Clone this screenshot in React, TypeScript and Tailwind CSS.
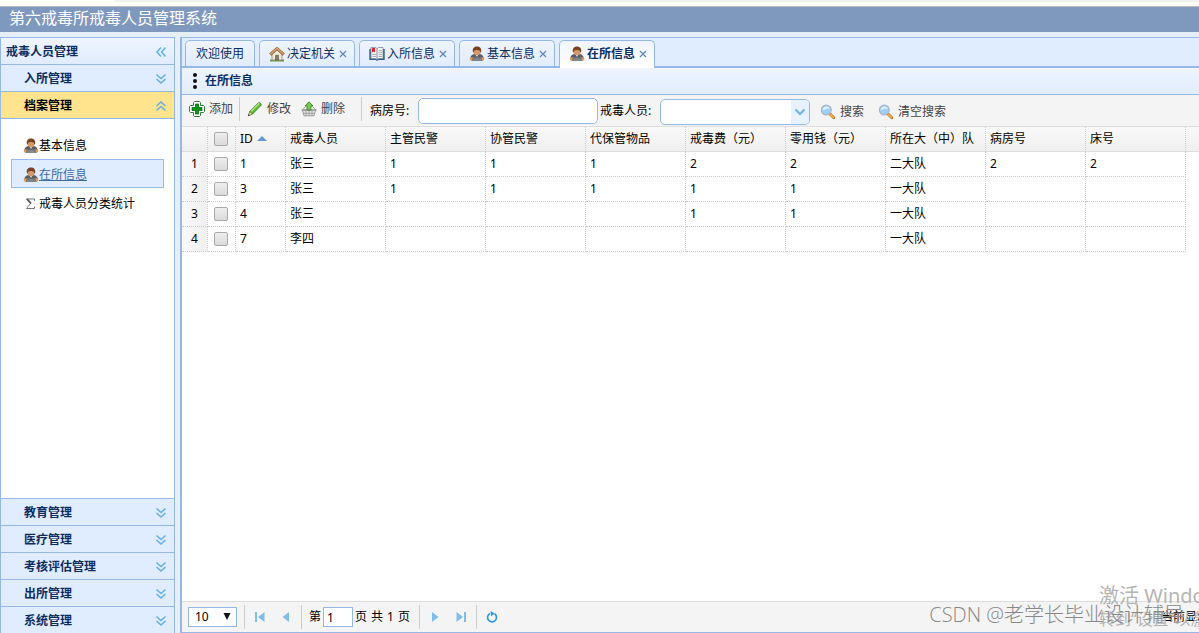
import React from "react";
import clsx from "clsx";

type IconProps = { className?: string };

function UserIcon({ className }: IconProps) {
    return (
        <svg viewBox="0 0 16 16" className={clsx("size-4 shrink-0", className)}>
            <path d="M1.200 13.500C1 11 2.300 8.500 5 8h6c2.700.5 4 3 3.800 5.500-.2 1-1.500 1.200-2.500 1.200H4c-1 0-2.600-.2-2.800-1.200z" fill="#5b5e63" />
            <ellipse cx="2.200" cy="12.800" rx="1.500" ry="1.600" fill="#e09a52" />
            <ellipse cx="13.800" cy="12.800" rx="1.500" ry="1.600" fill="#e09a52" />
            <path d="M3.500 11.500c2 1.200 7 1.200 9 0M4 13.700h8" stroke="#8d9197" strokeWidth="1" fill="none" />
            <path d="M6.300 8h3.400L8 11z" fill="#e8e8ea" />
            <path d="M4.300 3.500h7.400v2.800C11.500 8 10 9.300 8 9.300S4.500 8 4.300 6.300z" fill="#d29a6b" />
            <path d="M3.800 5.800C3.200 2 5.500.4 8 .4s4.800 1.600 4.200 5.400l-.9.7C11.300 4.500 10 3.900 8 4 6 3.900 4.700 4.500 4.700 6.500z" fill="#7a4220" />
        </svg>
    );
}

function HomeIcon() {
    return (
        <svg viewBox="0 0 16 16" className="size-4 shrink-0">
            <path d="M1 14.500h14" stroke="#6f9a3c" strokeWidth="2" />
            <path d="M3 7l5-4 5 4v7H3z" fill="#eeead9" stroke="#8d8674" strokeWidth=".8" />
            <path d="M6.500 14V9.300h3V14z" fill="#8a7b66" stroke="#5b5244" strokeWidth=".6" />
            <path d="M1.200 8.700L8 2.500l6.800 6.200" fill="none" stroke="#8a5a2a" strokeWidth="3" strokeLinejoin="round" />
            <path d="M1.200 8.500L8 2.300l6.800 6.200" fill="none" stroke="#d6a26b" strokeWidth="1.600" strokeLinejoin="round" />
        </svg>
    );
}

function BookIcon() {
    return (
        <svg viewBox="0 0 16 16" className="size-4 shrink-0">
            <path d="M.3 3v11h6.200l1.500 1 1.500-1h6.200V3z" fill="#2f6094" />
            <path d="M2 1.500h4.500L8 2.700l1.500-1.200H14V12.500H9.500L8 13.500l-1.500-1H2z" fill="#f4f4f0" stroke="#7d8795" strokeWidth=".8" />
            <path d="M8 2.700v10.500" stroke="#8791a0" />
            <path d="M3.300 8.500H7M3.300 10.500H7M9.500 4.500h3.500M9.500 6.500h3.500M9.500 8.500h3.500M9.500 10.500h3.500" stroke="#a2a8b2" strokeWidth=".9" />
            <path d="M3 2h3v4.500L4.500 5.500 3 6.500z" fill="#e32626" />
        </svg>
    );
}

function SigmaIcon() {
    return (
        <svg viewBox="0 0 16 16" className="size-4 shrink-0">
            <path d="M11.500 5V3H3.500l4 4.500-4 5h8v-2" fill="none" stroke="#777" />
            <path d="M4 3l4 4.500" stroke="#555" strokeWidth="1.800" />
        </svg>
    );
}

function AddIcon() {
    return (
        <svg viewBox="0 0 16 16" className="size-4 shrink-0">
            <path d="M5.500.5h5l1 1v3h3l1 1v5l-1 1h-3v3l-1 1h-5l-1-1v-3h-3l-1-1v-5l1-1h3v-3z" fill="#fff" stroke="#2c7d35" />
            <path d="M6.500 3h3v3.500H13v3H9.500V13h-3V9.500H3v-3h3.500z" fill="#0c950f" stroke="#096c13" strokeWidth=".8" />
        </svg>
    );
}

function PencilIcon() {
    return (
        <svg viewBox="0 0 16 16" className="size-4 shrink-0">
            <path d="M1.500 14.500l1.300-4L11.500 1.800c1-.8 3.300 1.200 2.500 2.500l-8.700 8.900z" fill="#62ba32" stroke="#387d1e" strokeWidth=".9" />
            <path d="M4.300 10.300l8-8" stroke="#b7e783" strokeWidth="1.300" />
            <path d="M1.200 14.800l1.500-4 2.600 2.500z" fill="#f0dcab" stroke="#5a6b2d" strokeWidth=".5" />
            <path d="M1 15l.6-1.800 1.200 1.200z" fill="#333" />
        </svg>
    );
}

function BasketIcon() {
    return (
        <svg viewBox="0 0 16 16" className="size-4 shrink-0">
            <path d="M1.500 9.500h13l-1.500 5.300H3z" fill="#e2e2e2" stroke="#888" strokeWidth=".8" />
            <path d="M.5 9h15" stroke="#a2a2a2" strokeWidth="1.800" />
            <path d="M5 10v4.500M8 10v4.500M11 10v4.500M2.500 12.300h11" stroke="#999" strokeWidth=".8" />
            <path d="M1.800 8.500L4 6M14.200 8.500L12 6" stroke="#aaa" />
            <path d="M8 .8L12 5H9.900v4H6.100V5H4z" fill="#78ca4d" stroke="#348527" strokeWidth=".9" />
        </svg>
    );
}

function SearchIcon() {
    return (
        <svg viewBox="0 0 16 16" className="size-4 shrink-0">
            <path d="M9.800 9.800l4 4" stroke="#a8631f" strokeWidth="2.800" strokeLinecap="round" />
            <path d="M10.500 10.500l3 3" stroke="#f5a844" strokeWidth="1.800" strokeLinecap="round" />
            <circle cx="6.300" cy="6" r="4.900" fill="#9fd0f6" stroke="#a9b5c3" strokeWidth="1.200" />
            <path d="M2.600 6.500c.2-3 2-4.200 4.200-4 1.700.1 2.700 1 3 2.500-2.500-.5-5 .2-7.200 1.500z" fill="#dcf0fd" />
        </svg>
    );
}

function DoubleChevron({ className }: IconProps) {
    return (
        <svg viewBox="0 0 16 16" className={clsx("size-4 shrink-0", className)}>
            <path d="M3.500 3.500L8 7.500l4.500-4M3.500 8L8 12l4.500-4" fill="none" stroke="#63afea" strokeWidth="1.500" />
        </svg>
    );
}

const links = [
    { label: "基本信息", icon: <UserIcon /> },
    { label: "在所信息", icon: <UserIcon />, active: true },
    { label: "戒毒人员分类统计", icon: <SigmaIcon /> },
];

const tabs = [
    { label: "欢迎使用" },
    { label: "决定机关", icon: <HomeIcon /> },
    { label: "入所信息", icon: <BookIcon /> },
    { label: "基本信息", icon: <UserIcon /> },
    { label: "在所信息", icon: <UserIcon />, active: true },
];

const columns = [
    "戒毒人员",
    "主管民警",
    "协管民警",
    "代保管物品",
    "戒毒费（元）",
    "零用钱（元）",
    "所在大（中）队",
    "病房号",
    "床号",
];

const rows = [
    ["1", "张三", "1", "1", "1", "2", "2", "二大队", "2", "2"],
    ["3", "张三", "1", "1", "1", "1", "1", "一大队", "", ""],
    ["4", "张三", "", "", "", "1", "1", "一大队", "", ""],
    ["7", "李四", "", "", "", "", "", "一大队", "", ""],
];

function AccordionHeader({ label, open }: { label: string; open?: boolean }) {
    return (
        <button
            type="button"
            aria-expanded={!!open}
            className={clsx(
                "flex h-[26px] w-full shrink-0 items-center justify-between pt-0.5 pr-[5px] pl-[23px] font-bold",
                open ? "bg-[#ffe48d] text-black" : "bg-[#e0ecff] text-[#0e2d5f]",
            )}
        >
            {label}
            <DoubleChevron className={open ? "rotate-180" : ""} />
        </button>
    );
}

function Sidebar() {
    return (
        <nav className="flex w-[175px] shrink-0 flex-col border border-b-0 border-[#95b8e7] bg-white">
            <div className="flex h-[27px] shrink-0 items-center justify-between border-b border-[#95b8e7] bg-linear-to-b from-[#eff5ff] to-[#e0ecff] pt-0.5 pr-[5px] pl-[5px] font-bold text-[#0e2d5f]">
                <h2>戒毒人员管理</h2>
                <button type="button" aria-label="收起">
                    <DoubleChevron className="rotate-90" />
                </button>
            </div>
            <div className="border-b border-[#95b8e7]">
                <AccordionHeader label="入所管理" />
            </div>
            <div className="border-b border-[#95b8e7]">
                <AccordionHeader label="档案管理" open />
            </div>
            <ul className="min-h-0 flex-1 px-2.5 pt-[11px]">
                {links.map((item) => (
                    <li key={item.label}>
                        <a
                            href="#"
                            className={clsx(
                                "flex h-[29px] items-center border pt-0.5 pl-[11px]",
                                item.active
                                    ? "border-[#99bbe8] bg-[#e0ecff] text-[#416aa3] underline"
                                    : "border-transparent text-black",
                            )}
                        >
                            {item.icon}
                            {item.label}
                        </a>
                    </li>
                ))}
            </ul>
            {["教育管理", "医疗管理", "考核评估管理", "出所管理", "系统管理"].map((label) => (
                <div key={label} className="border-t border-[#95b8e7]">
                    <AccordionHeader label={label} />
                </div>
            ))}
        </nav>
    );
}

function TabBar() {
    return (
        <div className="flex h-[30px] shrink-0 items-end gap-1 border-b-2 border-[#95b8e7] bg-[#e0ecff] pl-[3px]">
            {tabs.map((tab) => (
                <div
                    key={tab.label}
                    className={clsx(
                        "flex shrink-0 items-center rounded-t-[5px] border border-b-0 border-[#95b8e7] text-[#0e2d5f]",
                        tab.icon ? "w-24 pl-[9px]" : "w-[70px] justify-center",
                        tab.active
                            ? "-mb-0.5 h-7 bg-linear-to-b from-[#eff5ff] to-white pb-0.5 font-bold"
                            : "h-[26px] bg-linear-to-b from-[#eff5ff] to-[#e0ecff]",
                    )}
                >
                    {tab.icon}
                    <button type="button" className={tab.icon ? "ml-0.5" : ""}>
                        {tab.label}
                    </button>
                    {tab.icon && (
                        <button type="button" aria-label={`关闭${tab.label}`} className="ml-1">
                            <svg viewBox="0 0 8 8" className="size-2">
                                <path d="M1 1l6 6M7 1L1 7" stroke="#6387bd" strokeWidth="1.300" />
                            </svg>
                        </button>
                    )}
                </div>
            ))}
        </div>
    );
}

function ToolButton({ icon, children }: { icon: React.ReactNode; children: string }) {
    return (
        <button type="button" className="flex shrink-0 items-center gap-1 text-[#444]">
            {icon}
            {children}
        </button>
    );
}

function Separator() {
    return <div className="h-6 w-px shrink-0 bg-[#ccc]" />;
}

function Toolbar() {
    return (
        <form className="flex h-[31px] shrink-0 items-center bg-[#f4f4f4] pl-[7px]">
            <div className="flex items-center pb-[3px]">
                <ToolButton icon={<AddIcon />}>添加</ToolButton>
                <div className="mr-[7px] ml-1.5">
                    <Separator />
                </div>
                <ToolButton icon={<PencilIcon />}>修改</ToolButton>
                <div className="mr-4 ml-2.5">
                    <ToolButton icon={<BasketIcon />}>删除</ToolButton>
                </div>
                <Separator />
            </div>
            <label htmlFor="room" className="ml-2 w-12 shrink-0">
                病房号:
            </label>
            <input
                id="room"
                className="h-[26px] w-[180px] shrink-0 rounded-[5px] border border-[#95b8e7] bg-white px-1 outline-none"
            />
            <label htmlFor="person" className="ml-0.5 w-[60px] shrink-0">
                戒毒人员:
            </label>
            <div className="relative mt-0.5 w-[150px] shrink-0">
                <select
                    id="person"
                    className="block h-[26px] w-full appearance-none rounded-[5px] border border-[#95b8e7] bg-white outline-none"
                />
                <div className="pointer-events-none absolute inset-y-px right-px flex w-[18px] items-center justify-center rounded-r bg-[#e8f1ff]">
                    <svg viewBox="0 0 10 8" className="h-2 w-2.5">
                        <path d="M.5 1.500L5 6l4.500-4.500" fill="none" stroke="#6db2ea" strokeWidth="2" />
                    </svg>
                </div>
            </div>
            <div className="ml-2.5 flex gap-3.5 pt-0.5">
                <ToolButton icon={<SearchIcon />}>搜索</ToolButton>
                <ToolButton icon={<SearchIcon />}>清空搜索</ToolButton>
            </div>
        </form>
    );
}

function Check({ label }: { label: string }) {
    return (
        <input
            type="checkbox"
            aria-label={label}
            className="ml-1.5 block size-3.5 appearance-none rounded-[2px] border border-[#aaa] bg-linear-to-b from-[#eee] to-[#dadada] checked:bg-[#63afea]"
        />
    );
}

function DataGrid() {
    return (
        <div className="min-h-0 flex-1 overflow-hidden bg-white">
            <div className="border-y border-[#ddd] bg-linear-to-b from-[#f9f9f9] to-[#efefef]">
                <div className="h-6" />
            </div>
            <table className="-mt-[25px] w-[1004px] table-fixed border-separate border-spacing-0 text-left">
                <colgroup>
                    <col className="w-[26px]" />
                    <col className="w-7" />
                    <col className="w-[50px]" />
                    {columns.map((name) => (
                        <col key={name} className="w-[100px]" />
                    ))}
                </colgroup>
                <thead>
                    <tr className="h-[25px] [&>th]:border-r [&>th]:border-dotted [&>th]:border-[#ccc] [&>th]:p-0 [&>th]:pb-0.5 [&>th]:font-normal">
                        <th />
                        <th>
                            <Check label="全选" />
                        </th>
                        <th>
                            <button type="button" className="flex items-center gap-1 pl-1">
                                ID
                                <svg viewBox="0 0 10 5" className="h-[5px] w-2.5">
                                    <path d="M0 5l5-5 5 5z" fill="#6496d4" />
                                </svg>
                            </button>
                        </th>
                        {columns.map((name) => (
                            <th key={name}>
                                <span className="pl-1 whitespace-nowrap">{name}</span>
                            </th>
                        ))}
                    </tr>
                </thead>
                <tbody>
                    {rows.map((row, index) => (
                        <tr
                            key={row[0]}
                            className="h-[25px] [&>td]:border-r [&>td]:border-b [&>td]:border-dotted [&>td]:border-[#ccc] [&>td]:p-0"
                        >
                            <td className="bg-linear-to-r from-[#f9f9f9] to-[#efefef] text-center">
                                {index + 1}
                            </td>
                            <td>
                                <Check label={`选择第${index + 1}行`} />
                            </td>
                            {row.map((value, cell) => (
                                <td key={cell}>
                                    <span className="pl-1">{value}</span>
                                </td>
                            ))}
                        </tr>
                    ))}
                </tbody>
            </table>
        </div>
    );
}

function PageButton({ label, d }: { label: string; d: string }) {
    return (
        <button type="button" aria-label={label} className="flex w-[26px] shrink-0 justify-center">
            <svg viewBox="0 0 12 12" className="size-3">
                <path d={d} fill="#7fbdea" />
            </svg>
        </button>
    );
}

function Pagination() {
    return (
        <div className="flex h-8 shrink-0 items-center overflow-hidden border-y border-t-[#ddd] border-b-[#95b8e7] bg-[#f4f4f4] pl-1.5">
            <div className="relative mr-[7px] shrink-0">
                <select
                    aria-label="每页条数"
                    className="block h-5 w-[49px] appearance-none border border-[#95b8e7] bg-white pl-1.5 outline-none"
                >
                    <option>10</option>
                </select>
                <svg viewBox="0 0 8 7" className="pointer-events-none absolute top-1.5 right-1.5 h-[7px] w-2">
                    <path d="M.5 0h7L4 7z" fill="#111" />
                </svg>
            </div>
            <Separator />
            <div className="mr-0.5 ml-0.5 flex">
                <PageButton label="首页" d="M1 1h2v10H1zM10.500 1v10L4 6z" />
                <PageButton label="上一页" d="M9 1v10L2.500 6z" />
            </div>
            <Separator />
            <label htmlFor="page" className="ml-[7px] w-3.5 shrink-0">
                第
            </label>
            <input
                id="page"
                defaultValue="1"
                className="h-5 w-[30px] shrink-0 border border-[#95b8e7] bg-white px-[3px] outline-none"
            />
            <span className="flex w-[66px] shrink-0 gap-1 pl-0.5">
                <span>页</span>
                <span>共</span>
                <span>1</span>
                <span>页</span>
            </span>
            <Separator />
            <div className="mr-0.5 ml-0.5 flex">
                <PageButton label="下一页" d="M3 1v10l6.500-5z" />
                <PageButton label="末页" d="M1.500 1v10L8 6zM9 1h2v10H9z" />
            </div>
            <Separator />
            <button type="button" aria-label="刷新" className="ml-[9px] shrink-0">
                <svg viewBox="0 0 12 12" className="size-3">
                    <path d="M4 2.400A4.500 4.500 0 1 0 8.600 2.700" fill="none" stroke="#2f9be0" strokeWidth="1.700" />
                    <path d="M4.500 0l4.300 2.400L5 5.200z" fill="#2f9be0" />
                </svg>
            </button>
            <span className="ml-auto w-[38px] shrink-0 whitespace-nowrap">当前显示</span>
        </div>
    );
}

export default function App() {
    return (
        <div className='relative flex h-screen flex-col overflow-hidden bg-[#e6eef8] font-["Noto_Sans","Noto_Sans_CJK_SC",sans-serif] text-xs text-black'>
            <div className="h-[7px] shrink-0 border-b border-[#bbb] bg-white pl-[115px]">
                <div className="h-0.5 bg-[#f1f1f1]" />
            </div>
            <header className="flex h-[25px] shrink-0 items-center bg-[#7f99be] pb-1 pl-[9px] text-white">
                <h1 className="text-base">第六戒毒所戒毒人员管理系统</h1>
            </header>
            <div className="flex min-h-0 flex-1 pt-[5px]">
                <Sidebar />
                <main className="ml-[5px] flex min-w-0 flex-1 flex-col border-t border-l-2 border-[#95b8e7]">
                    <TabBar />
                    <div className="flex h-[27px] shrink-0 items-center gap-1.5 border-b border-[#95b8e7] bg-linear-to-b from-[#eff5ff] to-[#e0ecff] pl-2.5 font-bold text-[#0e2d5f]">
                        <svg viewBox="0 0 6 16" className="h-4 w-1.5">
                            <circle cx="3" cy="2" r="2" fill="#111" />
                            <circle cx="3" cy="8" r="2" fill="#111" />
                            <circle cx="3" cy="14" r="2" fill="#111" />
                        </svg>
                        <h2 className="ml-px">在所信息</h2>
                    </div>
                    <Toolbar />
                    <DataGrid />
                    <Pagination />
                </main>
            </div>
            <div className="pointer-events-none absolute right-0 bottom-0 h-12 w-[100px] overflow-hidden whitespace-nowrap text-[#b4b4b4]">
                <p className="text-xl leading-[22px]">激活 Windows</p>
                <p className="text-base leading-6">转到“设置”以激活 Windows。</p>
            </div>
            <p className='pointer-events-none absolute right-[15px] bottom-1.5 font-["Open_Sans","Noto_Sans_CJK_SC",sans-serif] text-xl leading-6 font-light whitespace-nowrap text-[#888]'>
                CSDN @老学长毕业设计辅导
            </p>
        </div>
    );
}
